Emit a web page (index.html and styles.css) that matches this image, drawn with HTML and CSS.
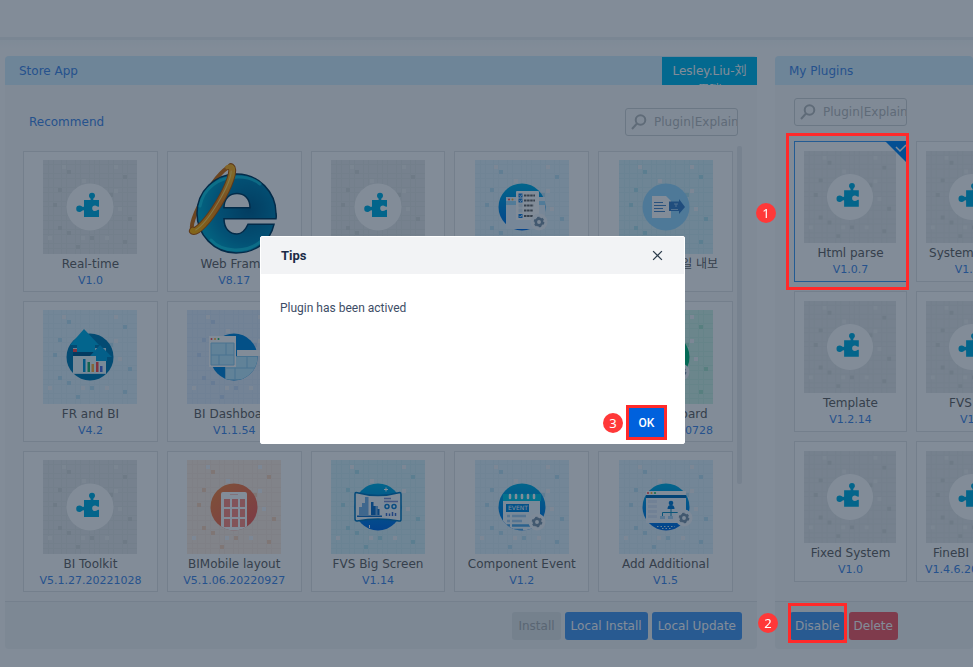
FILE: index.html
```html
<!DOCTYPE html>
<html lang="en">
<head>
    <meta charset="UTF-8">
    <meta name="viewport" content="width=device-width, initial-scale=1.0">
    <title>Plugin Management</title>
    <link rel="stylesheet" href="styles.css">
</head>
<body>

    <!-- shared icon shapes -->
    <svg class="sprite" aria-hidden="true">
        <defs>
            <linearGradient id="blue" x1="0" y1="0" x2="0" y2="1">
                <stop offset="0" stop-color="#00b0e4"/>
                <stop offset="1" stop-color="#006ce6"/>
            </linearGradient>
            <linearGradient id="orange" x1="0" y1="0" x2="1" y2="1">
                <stop offset="0" stop-color="#f88a3c"/>
                <stop offset="1" stop-color="#f45a5c"/>
            </linearGradient>
            <radialGradient id="globe" cx="0.65" cy="0.45" r="0.6">
                <stop offset="0" stop-color="#006090"/>
                <stop offset="0.7" stop-color="#0088b8"/>
                <stop offset="1" stop-color="#00a8cc"/>
            </radialGradient>
            <linearGradient id="gold" x1="0" y1="0" x2="1" y2="0">
                <stop offset="0" stop-color="#ffb000"/>
                <stop offset="0.5" stop-color="#f08010"/>
                <stop offset="1" stop-color="#ffc020"/>
            </linearGradient>
            <clipPath id="disc"><circle cx="47" cy="47" r="23.5"/></clipPath>
        </defs>

        <symbol id="tile" viewBox="0 0 94 94">
            <rect class="tile-bg" width="94" height="94"/>
            <path class="tile-lines" d="M5.5 0V94M10.5 0V94M18.500 0V94M23.500 0V94M32.500 0V94M37.500 0V94M46.500 0V94M51.500 0V94M56.500 0V94M65.500 0V94M70.500 0V94M79.500 0V94M84.500 0V94M0 4.500H94M0 13.500H94M0 18.500H94M0 27.500H94M0 32.500H94M0 41.500H94M0 46.500H94M0 55.500H94M0 60.500H94M0 69.500H94M0 74.500H94M0 83.500H94M0 88.500H94"/>
            <path class="tile-dark" d="M24 10h4v4h-4zM80 15h4v4h-4zM15 28h4v4h-4zM10 43h4v4h-4zM66 33h4v4h-4zM85 57h4v4h-4zM15 66h4v4h-4zM47 76h4v4h-4zM80 80h4v4h-4zM33 85h4v4h-4zM24 71h4v4h-4z"/>
            <path class="tile-light" d="M19 5h4v4h-4zM71 5h4v4h-4zM39 19h4v4h-4zM71 29h4v4h-4zM75 47h4v4h-4zM38 76h4v4h-4zM62 76h4v4h-4zM5 76h4v4h-4z"/>
        </symbol>

        <symbol id="puzzle" viewBox="0 0 94 94">
            <use href="#tile"/>
            <circle cx="47" cy="47" r="23.500" fill="#fff"/>
            <path fill="#00b0e4" d="M41 40h6.500c1-1.500-1.500-2-1.500-4.200a3 3 0 0 1 6 0c0 2.200-2.500 2.700-1.500 4.200H56v6.500c-1.500 1-2-1-4-1a2.800 2.800 0 0 0 0 5.600c2 0 2.500-2 4-1V57H41v-6.500c-1.500-1-2 1.500-4.500 1.500a3.300 3.300 0 0 1 0-6.600c2.500 0 3 2.500 4.500 1.100z"/>
        </symbol>

        <symbol id="gear" viewBox="0 0 18 18">
            <circle cx="9" cy="9" r="8.500" fill="#f4f8fc"/>
            <g fill="none" stroke="#7f97ac">
                <circle cx="9" cy="9" r="3.200" stroke-width="2.500"/>
                <circle cx="9" cy="9" r="4.600" stroke-width="1.500" stroke-dasharray="2.400 2.417"/>
            </g>
        </symbol>

        <symbol id="ie" viewBox="0 0 94 94">
            <ellipse rx="37" ry="8" transform="translate(25 39) rotate(-59)" fill="none" stroke="#d07010" stroke-width="4"/>
            <path fill="url(#globe)" stroke="#003c60" stroke-width="1.500" fill-rule="evenodd" d="M89 58.700H37C37 69 43 74 50 74 55 74 58 71 61 64.300H87C83 82 68 93 49 93A39.500 39.500 0 1 1 89 53.500Q89.500 56 89 58.700ZM37 47.700C37 38 43 33.500 50 33.500 57 33.500 63 38 63 47.700Z"/>
            <path d="M13 46C16 28 32 17 51 17 60 17 67 19 73 24M24 80C34 92 60 94 74 81" fill="none" stroke="#20e0f0" stroke-width="3" stroke-linecap="round" opacity="0.6"/>
            <g transform="translate(25 39) rotate(-59)" fill="none" stroke-linecap="round">
                <path d="M-37 0A37 8 0 0 0 37 0" stroke="#b85800" stroke-width="8"/>
                <path d="M-37 0A37 8 0 0 0 37 0" stroke="url(#gold)" stroke-width="6"/>
                <path d="M35 -3.500Q39 -1 35 2.500" stroke="#ffb020" stroke-width="4"/>
                <path d="M-35 2A37 8 0 0 0 34 2" stroke="#ffd860" stroke-width="1"/>
            </g>
        </symbol>

        <symbol id="language" viewBox="0 0 94 94">
            <use href="#tile"/>
            <circle cx="47" cy="47" r="23.500" fill="url(#blue)"/>
            <path fill="#e8f5ff" d="M31 37h39v4H31zM31 45h39v24H31z"/>
            <path fill="#9cdcff" d="M31 41h39v4H31z"/>
            <circle cx="34" cy="39.500" r="1" fill="#ff4848"/>
            <circle cx="37.500" cy="39.500" r="1" fill="#ffb030"/>
            <rect x="41" y="31" width="23" height="29" rx="1" fill="#fff"/>
            <path fill="#1580e0" d="M43.500 33.500h4v4h-4zM43.500 38.500h4v4h-4zM43.500 54h4v4h-4z"/>
            <path fill="#dcebf5" d="M43.500 43.500h4v4h-4zM43.500 48.500h4v4h-4z"/>
            <path stroke="#666" stroke-width="2" stroke-dasharray="2.500 .6" d="M49 35.500h11M49 40.500h11M49 45.500h9.500M49 50.500h9M49 56h9"/>
            <path stroke="#fff" stroke-width=".8" fill="none" d="M44.500 35.500l1 1 1.500-2M44.500 40.500l1 1 1.500-2M44.500 56l1 1 1.500-2"/>
            <use href="#gear" x="55" y="53" width="18" height="18"/>
        </symbol>

        <symbol id="export" viewBox="0 0 94 94">
            <use href="#tile"/>
            <circle cx="47" cy="47" r="23.500" fill="#96d8ff"/>
            <path fill="#fff" d="M33 36h14l5 5v17H33z"/>
            <path stroke="#4a88c8" stroke-width="1.200" d="M35 42.500h9M35 45.500h12M35 48.500h9M35 51.500h11"/>
            <path fill="#3a80c8" d="M50 41.500h10V39l6 8-6 7v-3H50z"/>
            <path stroke="#9cc8f0" stroke-width="1" d="M55 44h4M57 44v3M52 49.500h7"/>
        </symbol>

        <symbol id="upload" viewBox="0 0 94 94">
            <use href="#tile"/>
            <circle cx="47" cy="47" r="23.500" fill="#007cb4"/>
            <path fill="#fff" d="M30 38h33v26H30z" opacity=".8"/>
            <path fill="#00b0e8" d="M27 35L41 19l15 16h-4v14H34V35z"/>
            <path fill="#005c90" d="M30 42h22v4H30z"/>
            <path fill="#eafaff" d="M30 46h33v17H30z"/>
            <path fill="#00a4e0" d="M47 46l10-11 12 12h-5v4H53v-5z"/>
            <path fill="#ff4848" d="M30 39h4v3h-4zM53 52h2.500v10H53z"/>
            <path fill="#0098d8" d="M40 49h2.500v13H40z"/>
            <path fill="#20b070" d="M44.500 52h2.500v10h-2.500z"/>
            <path fill="#ffb040" d="M48.500 54h2.500v8h-2.500z"/>
            <path fill="#5070e0" d="M57 56h2.500v6H57z"/>
        </symbol>

        <symbol id="dashboard" viewBox="0 0 94 94">
            <use href="#tile"/>
            <circle cx="47" cy="47" r="23.500" fill="#0086dc"/>
            <path fill="#fff" d="M50 40h25v6H50z"/>
            <g clip-path="url(#disc)"><path fill="#bdeaff" stroke="#8cccee" d="M38.500 46.500h32v23h-32zM38.500 58h32M48 58v12M60 46v12"/></g>
            <path fill="#fff" d="M22 26h27v31H22z"/>
            <path fill="#bdeaff" stroke="#8cccee" d="M24 33h23v22H24zM24 45h23M39 33v12M32 45v10"/>
            <circle cx="24.500" cy="29" r="1" fill="#ff4848"/>
            <circle cx="28" cy="29" r="1" fill="#ffb030"/>
            <circle cx="31.500" cy="29" r="1" fill="#20c060"/>
        </symbol>

        <symbol id="board" viewBox="0 0 94 94">
            <use href="#tile"/>
            <circle cx="47" cy="47" r="23.500" fill="#00b878"/>
            <path fill="#fff" d="M33 36h28v22H33z"/>
            <use href="#gear" x="53" y="53" width="18" height="18"/>
        </symbol>

        <symbol id="mobile" viewBox="0 0 94 94">
            <use href="#tile"/>
            <circle cx="47" cy="47" r="23.500" fill="url(#orange)"/>
            <g clip-path="url(#disc)">
                <rect x="34" y="32" width="26" height="44" rx="2" fill="#fff"/>
                <path fill="#ff8c80" d="M37 39h6v8h-6zM45 39h6v8h-6zM53 39h5v8h-5zM37 49h6v8h-6zM45 49h6v8h-6zM53 49h5v8h-5zM37 59h6v8h-6zM45 59h6v8h-6zM53 59h5v8h-5z"/>
            </g>
            <path stroke="#ffc8c0" d="M43 34.500h8"/>
        </symbol>

        <symbol id="screen" viewBox="0 0 94 94">
            <use href="#tile"/>
            <circle cx="47" cy="47" r="23.500" fill="url(#blue)"/>
            <path fill="#f4fbff" stroke="#0078c0" stroke-width="1.500" d="M25 32.500q22 6 44 0 1 0 1 2v25q0 2-2 1.500-21-4-42 0-2 0-2-2v-25q0-1.500 1-1.500z"/>
            <path fill="#78b4e8" d="M28 47h3v8h-3zM31 43h3v12h-3zM34 37h3.500v18H34zM44 46h3v9h-3z"/>
            <path fill="#1070c8" d="M40 42h2.500v13H40zM42.500 46h2v9h-2zM46.500 49h2v6h-2zM26 55.500h25v1.500H26z"/>
            <path stroke="#8090d0" stroke-width="1.500" d="M53 38.500h7M53 41.500h14"/>
            <circle cx="56" cy="46.500" r="2" fill="none" stroke="#1080d0" stroke-width="1.500"/>
            <circle cx="63" cy="46.500" r="2" fill="none" stroke="#1080d0" stroke-width="1.500"/>
            <path stroke="#4070d0" stroke-width="1.500" d="M55.500 53v3M58.500 53.500v2.500M61.500 52v4M64.500 53v3"/>
            <path stroke="#fff" d="M55 27.500v4M53 29.500h4M38.500 65v3"/>
        </symbol>

        <symbol id="event" viewBox="0 0 94 94">
            <use href="#tile"/>
            <circle cx="47" cy="47" r="23.500" fill="url(#blue)"/>
            <path fill="#00c8e8" d="M28 34h38v7H28z"/>
            <g clip-path="url(#disc)"><path fill="#eef8ff" d="M28 41h37v32H28z"/>
            <path stroke="#a8d0f0" stroke-width="2.500" d="M32 56h3M37 56h14M32 61h3M37 61h10"/>
            <path stroke="#50a8e8" stroke-width="2.500" d="M32 65.500h3M37 65.500h20M39 70h9"/></g>
            <path stroke="#fff" stroke-width="2.500" stroke-linecap="round" d="M35 35v3M41 35v3M47 35v3M53 35v3M59 35v3"/>
            <path fill="#0088e0" d="M31 44h23v8H31z"/>
            <text x="33" y="50" class="event-text">EVENT</text>
            <use href="#gear" x="53" y="53" width="18" height="18"/>
        </symbol>

        <symbol id="additional" viewBox="0 0 94 94">
            <use href="#tile"/>
            <circle cx="47" cy="47" r="23.500" fill="url(#blue)"/>
            <path fill="#fff" d="M27 31h40v4H27z"/>
            <path fill="#006cb8" d="M27 35h40v3H27z"/>
            <path fill="#eef6ff" d="M27 38h40v25H27z"/>
            <path fill="#dce8f8" d="M29 40h9v3h-9zM29 45h9v3h-9zM29 50h9v3h-9zM29 55h9v3h-9z"/>
            <circle cx="29" cy="33" r="1" fill="#ff4848"/>
            <circle cx="32.500" cy="33" r="1" fill="#ffb030"/>
            <circle cx="36" cy="33" r="1" fill="#20c060"/>
            <circle cx="52" cy="43" r="2.300" fill="#0078d0"/>
            <path fill="#0078d0" d="M48.500 49q0-4 3.500-4t3.500 4z"/>
            <path fill="none" stroke="#1090c0" d="M52 49v7M43.500 56v-3.500h17V56"/>
            <path fill="#a8d4f4" d="M41 56h5v3h-5zM49 56h5v3h-5z"/>
            <path stroke="#d0f0ff" stroke-dasharray="1.500 2" d="M38 66.500h18M43 68.500h9"/>
            <use href="#gear" x="56" y="49" width="18" height="18"/>
        </symbol>
    </svg>

    <header class="topbar"></header>

    <main class="workspace">
        <section class="panel store">
            <div class="panel-header">
                <h2>Store App</h2>
                <button class="user" type="button">Lesley.Liu-刘果瑞</button>
            </div>
            <div class="panel-body">
                <div class="toolbar">
                    <a class="tab" href="#recommend">Recommend</a>
                    <label class="search">
                        <svg viewBox="0 0 16 16" aria-hidden="true"><circle cx="9.500" cy="6" r="4.800"/><path d="M6 9.500L1 15"/></svg>
                        <input type="text" placeholder="Plugin|Explain" aria-label="Search store plugins">
                    </label>
                </div>
                <div class="scroll-area">
                    <div class="cards" id="recommend">
                        <article class="card"><svg class="thumb gray"><use href="#puzzle"/></svg><h3>Real-time</h3><p>V1.0</p></article>
                        <article class="card"><svg class="thumb"><use href="#ie"/></svg><h3>Web Frame</h3><p>V8.17</p></article>
                        <article class="card"><svg class="thumb gray"><use href="#puzzle"/></svg><h3>Parameter</h3><p>V1.3</p></article>
                        <article class="card"><svg class="thumb sky"><use href="#language"/></svg><h3>Language</h3><p>V2.0</p></article>
                        <article class="card"><svg class="thumb cyan"><use href="#export"/></svg><h3>대용량 ftp 파일 내보</h3><p>V1.0</p></article>

                        <article class="card"><svg class="thumb sky"><use href="#upload"/></svg><h3>FR and BI</h3><p>V4.2</p></article>
                        <article class="card"><svg class="thumb lilac"><use href="#dashboard"/></svg><h3>BI Dashboard</h3><p>V1.1.54</p></article>
                        <article class="card"><svg class="thumb gray"><use href="#puzzle"/></svg><h3>Report</h3><p>V1.0</p></article>
                        <article class="card"><svg class="thumb gray"><use href="#puzzle"/></svg><h3>Chart</h3><p>V1.0</p></article>
                        <article class="card"><svg class="thumb green"><use href="#board"/></svg><h3>FR Dashboard</h3><p>V5.1.6.20220728</p></article>

                        <article class="card"><svg class="thumb gray"><use href="#puzzle"/></svg><h3>BI Toolkit</h3><p>V5.1.27.20221028</p></article>
                        <article class="card"><svg class="thumb peach"><use href="#mobile"/></svg><h3>BIMobile layout</h3><p>V5.1.06.20220927</p></article>
                        <article class="card"><svg class="thumb cyan"><use href="#screen"/></svg><h3>FVS Big Screen</h3><p>V1.14</p></article>
                        <article class="card"><svg class="thumb sky"><use href="#event"/></svg><h3>Component Event</h3><p>V1.2</p></article>
                        <article class="card"><svg class="thumb sky"><use href="#additional"/></svg><h3>Add Additional</h3><p>V1.5</p></article>
                    </div>
                    <div class="scrollbar"></div>
                </div>
            </div>
            <div class="panel-footer">
                <button class="btn" type="button" disabled>Install</button>
                <button class="btn primary" type="button">Local Install</button>
                <button class="btn primary" type="button">Local Update</button>
            </div>
        </section>

        <section class="panel mine">
            <div class="panel-header">
                <h2>My Plugins</h2>
            </div>
            <div class="panel-body">
                <div class="toolbar">
                    <label class="search">
                        <svg viewBox="0 0 16 16" aria-hidden="true"><circle cx="9.500" cy="6" r="4.800"/><path d="M6 9.500L1 15"/></svg>
                        <input type="text" placeholder="Plugin|Explain" aria-label="Search my plugins">
                    </label>
                </div>
                <div class="cards">
                    <article class="card selected">
                        <svg class="corner" viewBox="0 0 22 22" aria-hidden="true"><path d="M0 0h22v22z" fill="#0084f4"/><path d="M11 6l4 4 6-6" fill="none" stroke="#fff" stroke-width="1.500"/></svg>
                        <svg class="thumb gray"><use href="#puzzle"/></svg><h3>Html parse</h3><p>V1.0.7</p>
                        <span class="frame frame-card"></span><span class="step step-card">1</span>
                    </article>
                    <article class="card"><svg class="thumb gray"><use href="#puzzle"/></svg><h3>System Toolkit</h3><p>V1.2.3</p></article>
                    <article class="card"><svg class="thumb gray"><use href="#puzzle"/></svg><h3>Template</h3><p>V1.2.14</p></article>
                    <article class="card"><svg class="thumb gray"><use href="#puzzle"/></svg><h3>FVS Tab</h3><p>V1.8</p></article>
                    <article class="card"><svg class="thumb gray"><use href="#puzzle"/></svg><h3>Fixed System</h3><p>V1.0</p></article>
                    <article class="card"><svg class="thumb gray"><use href="#puzzle"/></svg><h3>FineBI Charts</h3><p>V1.4.6.20220728</p></article>
                </div>
            </div>
            <div class="panel-footer">
                <div class="marked">
                    <button class="btn primary" type="button">Disable</button>
                    <span class="frame frame-disable"></span><span class="step step-disable">2</span>
                </div>
                <button class="btn danger" type="button">Delete</button>
            </div>
        </section>
    </main>

    <div class="mask">
        <div class="dialog" role="dialog" aria-labelledby="dialog-title">
            <div class="dialog-header">
                <h2 id="dialog-title">Tips</h2>
                <button class="close" type="button" aria-label="Close">
                    <svg viewBox="0 0 10 10"><path d="M1 1l8 8M9 1L1 9"/></svg>
                </button>
            </div>
            <p class="dialog-body">Plugin has been actived</p>
            <div class="dialog-footer">
                <div class="marked">
                    <button class="ok" type="button">OK</button>
                    <span class="frame frame-ok"></span><span class="step step-ok">3</span>
                </div>
            </div>
        </div>
    </div>

</body>
</html>
```
FILE: styles.css
```css
* {
    box-sizing: border-box;
}

body {
    margin: 0;
    min-height: 100vh;
    overflow: hidden;
    background-color: #ffffff;
    color: #666666;
    font-family: "DejaVu Sans", "Noto Sans CJK SC", "Noto Sans CJK KR", sans-serif;
    font-size: 12px;
}

h2, h3, p {
    margin: 0;
    font-size: 12px;
    font-weight: normal;
}

button, input {
    font-family: inherit;
    font-size: 12px;
}

.sprite {
    position: absolute;
    width: 0;
    height: 0;
}

.topbar {
    height: 40px;
    border-bottom: 3px solid #eef3f5;
}

/* panels */
.workspace {
    display: flex;
    gap: 18px;
    padding: 16px 0 18px 5px;
    background: linear-gradient(#f8fbfc, #ffffff 10px);
}

.panel {
    display: flex;
    flex-direction: column;
    background-color: #fbfbfb;
    border-radius: 4px;
}

.store {
    flex: 1;
    min-width: 0;
}

.mine {
    flex: 0 0 198px;
    min-width: 0;
}

.panel-header {
    display: flex;
    align-items: center;
    justify-content: space-between;
    height: 29px;
    padding: 1px 0 0 14px;
    background-color: #d6f0ff;
    border-radius: 4px 4px 0 0;
}

.panel-header h2 {
    color: #468ae8;
}

.user {
    display: flex;
    align-items: flex-start;
    width: 95px;
    height: 28px;
    padding: 5px 6px 0;
    overflow: hidden;
    border: none;
    background-color: #00b8ec;
    color: #ffffff;
    line-height: 19px;
    word-break: break-all;
}

.panel-body {
    flex: 1;
}

.store .panel-body {
    padding: 23px 15px 9px 18px;
}

.mine .panel-body {
    padding: 13px 0 9px 19px;
}

.toolbar {
    display: flex;
    align-items: center;
    justify-content: space-between;
    margin-bottom: 15px;
}

.store .toolbar {
    padding: 0 4px 0 6px;
}

.tab {
    color: #468ae8;
    text-decoration: none;
}

.search {
    display: flex;
    align-items: center;
    width: 113px;
    height: 28px;
    padding-left: 5px;
    overflow: hidden;
    border: 1px solid #d0d4d6;
    border-radius: 3px;
}

.search svg {
    flex: none;
    width: 16px;
    height: 16px;
    margin-right: 7px;
    fill: none;
    stroke: #b8bcbe;
    stroke-width: 2;
}

.search input {
    flex: 1;
    min-width: 0;
    padding: 0;
    border: none;
    outline: none;
    background: none;
}

.search input::placeholder {
    color: #b8bcbe;
}

.scroll-area {
    display: flex;
    align-items: flex-start;
    gap: 4px;
}

.scrollbar {
    width: 5px;
    height: 338px;
    margin-top: -5px;
    border-radius: 2px;
    background-color: #e8eaec;
}

/* plugin cards */
.cards {
    flex: 1;
    display: grid;
    grid-template-columns: repeat(5, 1fr);
    gap: 9px;
}

.mine .cards {
    grid-template-columns: repeat(2, 113px);
}

.card {
    position: relative;
    min-width: 0;
    height: 141px;
    padding-top: 8px;
    border: 1px solid #e2e5e6;
    background-color: #ffffff;
    text-align: center;
    white-space: nowrap;
}

.mine .card {
    padding-top: 9px;
}

.card.selected {
    border-color: #409cf4;
}

.card h3 {
    line-height: 20px;
}

.card p {
    color: #468ae8;
    font-size: 11px;
    line-height: 14px;
}

.corner {
    position: absolute;
    top: -1px;
    right: -1px;
    width: 22px;
    height: 22px;
}

.thumb {
    display: block;
    width: 94px;
    height: 94px;
    margin: 0 auto;
    --bg: #e0f2fc;
    --lines: #daeef8;
    --dark: #bce2f4;
    --light: #f2f4f8;
}

.mine .thumb {
    width: 92px;
    height: 92px;
    margin-left: 9px;
}

.thumb.gray {
    --bg: #e6e9ea;
    --lines: #e1e4e5;
    --dark: #d6dada;
    --light: #eef0f1;
}

.thumb.cyan {
    --bg: #d6f0f8;
    --lines: #cfecf5;
    --dark: #b0e2ee;
}

.thumb.lilac {
    --bg: #e0edfa;
    --lines: #daE8f8;
    --dark: #c8dcf6;
}

.thumb.green {
    --bg: #d0f2e6;
    --lines: #c6eee0;
    --dark: #a8e4cc;
}

.thumb.peach {
    --bg: #fcece0;
    --lines: #f9e7da;
    --dark: #f8d2b8;
}

.tile-bg {
    fill: var(--bg);
}

.tile-lines {
    fill: none;
    stroke: var(--lines);
}

.tile-dark {
    fill: var(--dark);
}

.tile-light {
    fill: var(--light);
}

.event-text {
    fill: #ffffff;
    font-size: 6px;
}

/* footer buttons */
.panel-footer {
    display: flex;
    align-items: flex-start;
    justify-content: flex-end;
    gap: 4px;
    height: 48px;
    padding: 10px 15px 0;
    border-top: 1px solid #e4e6e8;
    background-color: #f4f6f7;
    border-radius: 0 0 4px 4px;
}

.mine .panel-footer {
    justify-content: flex-start;
}

.btn {
    height: 28px;
    padding: 0 6px;
    border: none;
    border-radius: 3px;
    background-color: #e4e8e9;
    color: #ffffff;
}

.mine .btn {
    padding: 0 5px;
}

.btn:disabled {
    color: #aeb2b4;
}

.btn.primary {
    background-color: #4a9af0;
}

.btn.danger {
    background-color: #f85c66;
}

/* dialog */
.mask {
    position: fixed;
    inset: 0;
    z-index: 1;
    display: flex;
    align-items: center;
    justify-content: center;
    padding: 13px 28px 0 0;
    background-color: rgba(5, 25, 49, 0.5);
}

.dialog {
    display: flex;
    flex-direction: column;
    width: 425px;
    height: 208px;
    border: 1px solid #ffffff;
    border-radius: 2px;
    background-color: #ffffff;
    color: #3d4d66;
    font-family: Roboto, "Liberation Sans", Arial, sans-serif;
}

.dialog-header {
    display: flex;
    align-items: center;
    justify-content: space-between;
    height: 37px;
    padding: 0 16px 0 20px;
    background-color: #f2f3f5;
}

.dialog-header h2 {
    color: #1a2b47;
    font-size: 13px;
    font-weight: bold;
}

.close {
    display: flex;
    padding: 5px;
    border: none;
    background: none;
}

.close svg {
    width: 11px;
    height: 11px;
    stroke: #2d3d4c;
    stroke-width: 1.2;
}

.dialog-body {
    flex: 1;
    padding: 27px 19px;
}

.dialog-footer {
    display: flex;
    justify-content: flex-end;
    padding: 0 19px 5px;
}

.ok {
    display: block;
    width: 37px;
    height: 30px;
    border: none;
    background-color: #0061dd;
    color: #ffffff;
    font-weight: 500;
}

/* numbered steps */
.marked {
    position: relative;
}

.frame {
    position: absolute;
    z-index: 2;
    border: 3px solid #ff2a2a;
    pointer-events: none;
}

.frame-card {
    inset: -9px -3px -9px -9px;
}

.frame-disable {
    inset: -9px -2px -3px -2px;
}

.frame-ok {
    inset: -3px -2px -2px -2px;
}

.step {
    position: absolute;
    z-index: 2;
    width: 20px;
    height: 20px;
    border-radius: 50%;
    background-color: #ff3838;
    color: #ffffff;
    font-family: "Noto Sans", sans-serif;
    font-size: 13px;
    line-height: 20px;
    text-align: center;
}

.step-card {
    top: 61px;
    left: -39px;
}

.step-disable {
    top: 1px;
    left: -32px;
}

.step-ok {
    top: 5px;
    left: -25px;
}
```
